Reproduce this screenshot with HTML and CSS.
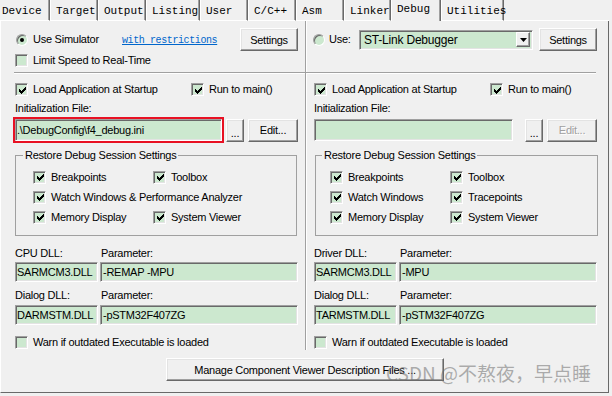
FILE: index.html
```html
<!DOCTYPE html>
<html>
<head>
<meta charset="utf-8">
<link rel="stylesheet" href="styles.css">
</head>
<body>
<div class="tabs">
  <div class="tab tab-device">Device</div>
  <div class="tab tab-target">Target</div>
  <div class="tab tab-output">Output</div>
  <div class="tab tab-listing">Listing</div>
  <div class="tab tab-user">User</div>
  <div class="tab tab-cpp">C/C++</div>
  <div class="tab tab-asm">Asm</div>
  <div class="tab tab-linker">Linker</div>
  <div class="tab tab-debug active">Debug</div>
  <div class="tab tab-util">Utilities</div>
  <div class="tab-fill"></div>
</div>
<div class="panel">
  <div class="cols">
    <div class="col col-left">
      <div class="row row-top">
        <label class="opt opt-sim"><span class="rb checked"></span>Use Simulator</label>
        <a class="link">with restrictions</a>
        <button class="btn btn-settings">Settings</button>
      </div>
      <div class="row row-speed">
        <label class="opt"><span class="cb"></span>Limit Speed to Real-Time</label>
      </div>
      <div class="sep sep-left"></div>
      <div class="row row-load">
        <label class="opt opt-load"><span class="cb"><svg class="chk" width="7" height="7" viewBox="0 0 7 7"><path d="M0 2h1v3h-1zM1 3h1v3h-1zM2 4h1v3h-1zM3 3h1v3h-1zM4 2h1v3h-1zM5 1h1v3h-1zM6 0h1v3h-1z"/></svg></span>Load Application at Startup</label>
        <label class="opt"><span class="cb"><svg class="chk" width="7" height="7" viewBox="0 0 7 7"><path d="M0 2h1v3h-1zM1 3h1v3h-1zM2 4h1v3h-1zM3 3h1v3h-1zM4 2h1v3h-1zM5 1h1v3h-1zM6 0h1v3h-1z"/></svg></span>Run to main()</label>
      </div>
      <div class="lbl lbl-init">Initialization File:</div>
      <div class="row row-init">
        <div class="initbox initbox-hl initbox-left"><div class="field field-init">.\DebugConfig\f4_debug.ini</div></div>
        <button class="btn btn-dots">...</button>
        <button class="btn btn-edit">Edit...</button>
      </div>
      <fieldset class="group group-left">
        <legend>Restore Debug Session Settings</legend>
        <div class="grow">
          <label class="opt opt-c1"><span class="cb"><svg class="chk" width="7" height="7" viewBox="0 0 7 7"><path d="M0 2h1v3h-1zM1 3h1v3h-1zM2 4h1v3h-1zM3 3h1v3h-1zM4 2h1v3h-1zM5 1h1v3h-1zM6 0h1v3h-1z"/></svg></span>Breakpoints</label>
          <label class="opt"><span class="cb"><svg class="chk" width="7" height="7" viewBox="0 0 7 7"><path d="M0 2h1v3h-1zM1 3h1v3h-1zM2 4h1v3h-1zM3 3h1v3h-1zM4 2h1v3h-1zM5 1h1v3h-1zM6 0h1v3h-1z"/></svg></span>Toolbox</label>
        </div>
        <div class="grow">
          <label class="opt"><span class="cb"><svg class="chk" width="7" height="7" viewBox="0 0 7 7"><path d="M0 2h1v3h-1zM1 3h1v3h-1zM2 4h1v3h-1zM3 3h1v3h-1zM4 2h1v3h-1zM5 1h1v3h-1zM6 0h1v3h-1z"/></svg></span>Watch Windows &amp; Performance Analyzer</label>
        </div>
        <div class="grow">
          <label class="opt opt-c1"><span class="cb"><svg class="chk" width="7" height="7" viewBox="0 0 7 7"><path d="M0 2h1v3h-1zM1 3h1v3h-1zM2 4h1v3h-1zM3 3h1v3h-1zM4 2h1v3h-1zM5 1h1v3h-1zM6 0h1v3h-1z"/></svg></span>Memory Display</label>
          <label class="opt"><span class="cb"><svg class="chk" width="7" height="7" viewBox="0 0 7 7"><path d="M0 2h1v3h-1zM1 3h1v3h-1zM2 4h1v3h-1zM3 3h1v3h-1zM4 2h1v3h-1zM5 1h1v3h-1zM6 0h1v3h-1z"/></svg></span>System Viewer</label>
        </div>
      </fieldset>
      <div class="dll">
        <div class="lbl lbl-dll">CPU DLL:</div>
        <div class="lbl lbl-dll">Parameter:</div>
        <div class="field field-dll">SARMCM3.DLL</div>
        <div class="field field-dll field-param">-REMAP -MPU</div>
        <div class="lbl lbl-dll">Dialog DLL:</div>
        <div class="lbl lbl-dll">Parameter:</div>
        <div class="field field-dll">DARMSTM.DLL</div>
        <div class="field field-dll field-param">-pSTM32F407ZG</div>
      </div>
      <div class="row row-warn">
        <label class="opt"><span class="cb"></span>Warn if outdated Executable is loaded</label>
      </div>
    </div>

    <div class="col col-right">
      <div class="row row-top">
        <label class="opt opt-use"><span class="rb"></span>Use:</label>
        <div class="combo">
          <span class="combo-text">ST-Link Debugger</span>
          <span class="combo-btn"><svg width="7" height="4" viewBox="0 0 7 4"><path d="M0 0h7L3.5 4z"/></svg></span>
        </div>
        <button class="btn btn-settings">Settings</button>
      </div>
      <div class="row row-speed"></div>
      <div class="sep sep-right"></div>
      <div class="row row-load">
        <label class="opt opt-load"><span class="cb"><svg class="chk" width="7" height="7" viewBox="0 0 7 7"><path d="M0 2h1v3h-1zM1 3h1v3h-1zM2 4h1v3h-1zM3 3h1v3h-1zM4 2h1v3h-1zM5 1h1v3h-1zM6 0h1v3h-1z"/></svg></span>Load Application at Startup</label>
        <label class="opt"><span class="cb"><svg class="chk" width="7" height="7" viewBox="0 0 7 7"><path d="M0 2h1v3h-1zM1 3h1v3h-1zM2 4h1v3h-1zM3 3h1v3h-1zM4 2h1v3h-1zM5 1h1v3h-1zM6 0h1v3h-1z"/></svg></span>Run to main()</label>
      </div>
      <div class="lbl lbl-init">Initialization File:</div>
      <div class="row row-init">
        <div class="initbox initbox-right"><div class="field field-init"></div></div>
        <button class="btn btn-dots">...</button>
        <button class="btn btn-edit disabled">Edit...</button>
      </div>
      <fieldset class="group group-right">
        <legend>Restore Debug Session Settings</legend>
        <div class="grow">
          <label class="opt opt-c1"><span class="cb"><svg class="chk" width="7" height="7" viewBox="0 0 7 7"><path d="M0 2h1v3h-1zM1 3h1v3h-1zM2 4h1v3h-1zM3 3h1v3h-1zM4 2h1v3h-1zM5 1h1v3h-1zM6 0h1v3h-1z"/></svg></span>Breakpoints</label>
          <label class="opt"><span class="cb"><svg class="chk" width="7" height="7" viewBox="0 0 7 7"><path d="M0 2h1v3h-1zM1 3h1v3h-1zM2 4h1v3h-1zM3 3h1v3h-1zM4 2h1v3h-1zM5 1h1v3h-1zM6 0h1v3h-1z"/></svg></span>Toolbox</label>
        </div>
        <div class="grow">
          <label class="opt opt-c1"><span class="cb"><svg class="chk" width="7" height="7" viewBox="0 0 7 7"><path d="M0 2h1v3h-1zM1 3h1v3h-1zM2 4h1v3h-1zM3 3h1v3h-1zM4 2h1v3h-1zM5 1h1v3h-1zM6 0h1v3h-1z"/></svg></span>Watch Windows</label>
          <label class="opt"><span class="cb"><svg class="chk" width="7" height="7" viewBox="0 0 7 7"><path d="M0 2h1v3h-1zM1 3h1v3h-1zM2 4h1v3h-1zM3 3h1v3h-1zM4 2h1v3h-1zM5 1h1v3h-1zM6 0h1v3h-1z"/></svg></span>Tracepoints</label>
        </div>
        <div class="grow">
          <label class="opt opt-c1"><span class="cb"><svg class="chk" width="7" height="7" viewBox="0 0 7 7"><path d="M0 2h1v3h-1zM1 3h1v3h-1zM2 4h1v3h-1zM3 3h1v3h-1zM4 2h1v3h-1zM5 1h1v3h-1zM6 0h1v3h-1z"/></svg></span>Memory Display</label>
          <label class="opt"><span class="cb"><svg class="chk" width="7" height="7" viewBox="0 0 7 7"><path d="M0 2h1v3h-1zM1 3h1v3h-1zM2 4h1v3h-1zM3 3h1v3h-1zM4 2h1v3h-1zM5 1h1v3h-1zM6 0h1v3h-1z"/></svg></span>System Viewer</label>
        </div>
      </fieldset>
      <div class="dll">
        <div class="lbl lbl-dll">Driver DLL:</div>
        <div class="lbl lbl-dll">Parameter:</div>
        <div class="field field-dll">SARMCM3.DLL</div>
        <div class="field field-dll field-param">-MPU</div>
        <div class="lbl lbl-dll">Dialog DLL:</div>
        <div class="lbl lbl-dll">Parameter:</div>
        <div class="field field-dll">TARMSTM.DLL</div>
        <div class="field field-dll field-param">-pSTM32F407ZG</div>
      </div>
      <div class="row row-warn">
        <label class="opt"><span class="cb"></span>Warn if outdated Executable is loaded</label>
      </div>
    </div>
  </div>
  <div class="footer">
    <button class="btn btn-manage">Manage Component Viewer Description Files ...</button>
  </div>
</div>
<div class="watermark">CSDN @不熬夜，早点睡</div>
</body>
</html>
```

FILE: styles.css
```css
* { box-sizing: border-box; }

html, body { margin: 0; padding: 0; }

body {
  width: 612px;
  height: 396px;
  overflow: hidden;
  position: relative;
  background: #f0f0f0;
  color: #000;
  font-family: "Liberation Sans", Arial, sans-serif;
  font-size: 11px;
  letter-spacing: -0.25px;
}

/* ---------- tabs ---------- */
.tabs {
  display: flex;
  height: 21px;
  width: 609px;
}
.tab {
  flex: none;
  height: 21px;
  border-left: 1px solid #fff;
  border-right: 1px solid #696969;
  border-bottom: 1px solid #fff;
  box-shadow: inset -1px 0 #a0a0a0;
  padding: 5px 0 0 5px;
  font-family: "Liberation Mono", "DejaVu Sans Mono", monospace;
  font-size: 11px;
  letter-spacing: 0;
  line-height: 13px;
  white-space: pre;
}
.tab-device { width: 50px; padding-left: 2px; border-left: none; }
.tab-target { width: 48px; }
.tab-output { width: 48px; }
.tab-listing { width: 54px; }
.tab-user { width: 48px; }
.tab-cpp { width: 48px; }
.tab-asm { width: 48px; }
.tab-linker { width: 47px; }
.tab-debug { width: 50px; }
.tab-util { width: 63px; }
.tab.active {
  border-bottom: none;
  padding-top: 3px;
}
.tab-fill {
  flex: 1;
  border-bottom: 1px solid #fff;
}

/* ---------- panel ---------- */
.panel {
  width: 609px;
  height: 372px;
  border-left: 1px solid #fff;
  border-right: 1px solid #696969;
  border-bottom: 1px solid #696969;
  display: flex;
  flex-direction: column;
}
.cols {
  display: flex;
  height: 329px;
}
.col {
  display: flex;
  flex-direction: column;
  padding-top: 7px;
}
.col-left {
  width: 305px;
  padding-left: 14px;
  padding-right: 7px;
  border-right: 1px solid #a0a0a0;
}
.col-right {
  width: 302px;
  padding-left: 7px;
  padding-right: 11px;
  border-left: 1px solid #fff;
}

.row {
  display: flex;
  align-items: center;
  flex: none;
}
.row-top { height: 23px; }
.row-speed { height: 13px; margin-top: 3px; }
.row-load { height: 13px; margin-top: 9px; }
.row-init { height: 26px; margin-top: 2px; }
.row-warn { height: 13px; margin-top: 11px; }

.opt {
  display: flex;
  align-items: center;
  gap: 5px;
  line-height: 13px;
  white-space: nowrap;
  flex: none;
}
.opt-sim { width: 107px; gap: 5px; }
.opt-sim .rb { margin-left: 1px; }
.opt-use { width: 45px; gap: 4px; }
.opt-use .rb { margin-left: -1px; }
.opt-load { width: 176px; }
.opt-c1 { width: 120px; }

.lbl {
  line-height: 14px;
  height: 14px;
  white-space: nowrap;
}
.lbl-init { margin-top: 5px; }

/* separator */
.sep {
  flex: none;
  height: 2px;
  margin-top: 5px;
  border-top: 1px solid #a0a0a0;
  border-bottom: 1px solid #fff;
}
.sep-left { margin-left: -1px; margin-right: -7px; }
.sep-right { margin-left: -8px; margin-right: 1px; }

/* link */
.link {
  color: #0066cc;
  text-decoration: underline;
  font-family: "Liberation Mono", "DejaVu Sans Mono", monospace;
  font-size: 10px;
  letter-spacing: -0.4px;
  line-height: 12px;
  margin-top: 2px;
  cursor: pointer;
}

/* checkbox */
.cb {
  flex: none;
  width: 13px;
  height: 13px;
  border: 1px solid;
  border-color: #a0a0a0 #fff #fff #a0a0a0;
  box-shadow: inset 1px 1px #696969, inset -1px -1px #e3e3e3;
  background: #cce8cf;
  display: flex;
  align-items: center;
  justify-content: center;
}
.chk {
  display: block;
  margin: 1px 0 0 1px;
  shape-rendering: crispEdges;
  fill: #000;
}

/* radio */
.rb {
  flex: none;
  width: 12px;
  height: 12px;
  border-radius: 50%;
  border: 1px solid;
  border-color: #a0a0a0 #fff #fff #a0a0a0;
  box-shadow: inset 1px 1px #696969;
  background: #cce8cf;
  display: flex;
  align-items: center;
  justify-content: center;
}
.rb.checked::after {
  content: "";
  width: 4px;
  height: 4px;
  border-radius: 50%;
  background: #000;
}

/* buttons */
.btn {
  flex: none;
  height: 23px;
  margin: 0;
  padding: 0;
  border: 1px solid;
  border-color: #fff #696969 #696969 #fff;
  box-shadow: inset -1px -1px #a0a0a0, inset 1px 1px #e3e3e3;
  background: #f0f0f0;
  color: #000;
  font-family: inherit;
  font-size: 11px;
  letter-spacing: -0.25px;
  display: flex;
  align-items: center;
  justify-content: center;
  white-space: nowrap;
}
.btn-settings { width: 58px; margin-left: auto; }
.btn-dots { width: 18px; margin-left: auto; padding-top: 5px; }
.btn-edit { width: 50px; margin-left: 4px; }
.btn.disabled { color: #a0a0a0; text-shadow: 1px 1px #fff; }
.btn-manage { width: 278px; }

/* fields */
.field {
  height: 22px;
  border: 1px solid;
  border-color: #a0a0a0 #fff #fff #a0a0a0;
  box-shadow: inset 1px 1px #696969, inset -1px -1px #e3e3e3;
  background: #cce8cf;
  padding-left: 1px;
  line-height: 20px;
  white-space: nowrap;
  overflow: hidden;
}
.initbox {
  flex: none;
  border: 2px solid transparent;
  margin-left: -2px;
}
.initbox-hl { border-color: #e81123; }
.initbox-left { width: 211px; }
.initbox-right { width: 203px; }

/* combo */
.combo {
  flex: none;
  width: 174px;
  height: 20px;
  border: 1px solid;
  border-color: #a0a0a0 #fff #fff #a0a0a0;
  box-shadow: inset 1px 1px #696969, inset -1px -1px #e3e3e3;
  background: #cce8cf;
  display: flex;
  align-items: center;
  padding: 2px 2px 2px 4px;
}
.combo-text {
  flex: 1;
  font-size: 12px;
  letter-spacing: -0.2px;
  line-height: 14px;
}
.combo-btn {
  width: 14px;
  height: 15px;
  border: 1px solid;
  border-color: #fff #696969 #696969 #fff;
  box-shadow: inset -1px -1px #a0a0a0;
  background: #f0f0f0;
  display: flex;
  align-items: center;
  justify-content: center;
}
.combo-btn svg { display: block; fill: #000; }

/* group box */
.group {
  flex: none;
  margin: 6px 0 0 0;
  padding: 5px 0 8px 17px;
  border: 1px solid #a0a0a0;
  min-width: 0;
}
.group-left { margin-right: 1px; }
.group-right { margin-left: 1px; margin-right: -1px; padding-left: 14px; }
.group legend {
  padding: 0 2px;
  margin-left: -10px;
  line-height: 13px;
  height: 13px;
}
.group-right legend { margin-left: -8px; }
.grow {
  display: flex;
  align-items: center;
  height: 20px;
}

/* dll grid */
.dll {
  flex: none;
  margin-top: 10px;
  display: grid;
  grid-template-columns: 83px 1fr;
  grid-template-rows: 14px 22px 20px 23px;
  column-gap: 2px;
}
.lbl-dll { align-self: end; }
.lbl-dll:nth-child(even) { padding-left: 1px; }
.field-dll { height: 20px; line-height: 18px; align-self: end; }
.field-param { padding-left: 2px; }

/* footer */
.footer {
  display: flex;
  justify-content: center;
  padding-top: 8px;
  padding-left: 1px;
}

/* watermark */
.watermark {
  position: absolute;
  left: 386px;
  top: 361px;
  font-family: "Noto Sans CJK SC", "Noto Sans", sans-serif;
  font-size: 19px;
  letter-spacing: 0;
  line-height: 24px;
  color: rgba(110, 110, 110, 0.55);
  white-space: nowrap;
}
```
